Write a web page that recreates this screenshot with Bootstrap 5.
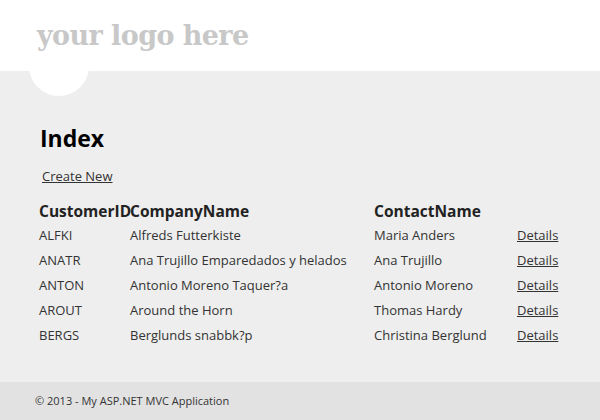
<!DOCTYPE html>
<html lang="en">
<head>
  <meta charset="UTF-8" />
  <title>Index</title>
  <link href="https://cdn.jsdelivr.net/npm/bootstrap@5.3.0/dist/css/bootstrap.min.css" rel="stylesheet" />
  <style>
    html, body { height: 100%; }
    body { font-family: "Open Sans", "Liberation Sans", sans-serif; color: #333; background: #eee; font-size: 13px; overflow: hidden; }
    .site-head { height: 71px; background: #fff; padding-left: 37px; }
    .site-logo { font-family: "DejaVu Serif", serif; font-weight: 700; font-size: 27px; letter-spacing: -0.58px; color: #c8c8c8; line-height: 71px; }
    .logo-bump { width: 60px; height: 25px; margin-left: 29px; overflow: hidden; }
    .logo-bump::after { content: ""; display: block; width: 60px; height: 60px; margin-top: -35px; background: #fff; border-radius: 50%; }
    .site-main { height: 286px; padding: 28px 0 0 40px; }
    .site-main h1 { font-size: 23px; font-weight: 700; color: #000; line-height: 28px; margin: 0 0 14px; font-family: "Open Sans", sans-serif; }
    .site-main a { color: #333; }
    .new-link { margin-left: 2px; display: block; line-height: 20px; margin-bottom: 12px; }
    .cust-table { border-collapse: collapse; margin-left: -1px; table-layout: fixed; width: 530px; }
    .cust-table th { font-size: 15.5px; font-weight: 700; color: #222; height: 24px; padding: 2px 0 0; white-space: nowrap; }
    .cust-table td { height: 25px; padding: 0; }
    .c1 { width: 91px; } .c2 { width: 244px; } .c3 { width: 143px; }
    .site-foot { height: 38px; background: #e2e2e2; padding-left: 35px; font-size: 11px; line-height: 38px; color: #333; }
  </style>
</head>
<body>
  <header class="site-head"><div class="site-logo">your logo here</div></header>
  <div class="logo-bump"></div>
  <main class="site-main">
    <h1>Index</h1>
    <a class="new-link" href="#">Create New</a>
    <table class="cust-table">
      <tr><th class="c1">CustomerID</th><th class="c2">CompanyName</th><th class="c3">ContactName</th><th></th></tr>
      <tr><td>ALFKI</td><td>Alfreds Futterkiste</td><td>Maria Anders</td><td><a href="#">Details</a></td></tr>
      <tr><td>ANATR</td><td>Ana Trujillo Emparedados y helados</td><td>Ana Trujillo</td><td><a href="#">Details</a></td></tr>
      <tr><td>ANTON</td><td>Antonio Moreno Taquer?a</td><td>Antonio Moreno</td><td><a href="#">Details</a></td></tr>
      <tr><td>AROUT</td><td>Around the Horn</td><td>Thomas Hardy</td><td><a href="#">Details</a></td></tr>
      <tr><td>BERGS</td><td>Berglunds snabbk?p</td><td>Christina Berglund</td><td><a href="#">Details</a></td></tr>
    </table>
  </main>
  <footer class="site-foot">© 2013 - My ASP.NET MVC Application</footer>
  <script src="https://cdn.jsdelivr.net/npm/bootstrap@5.3.0/dist/js/bootstrap.bundle.min.js"></script>
</body>
</html>
